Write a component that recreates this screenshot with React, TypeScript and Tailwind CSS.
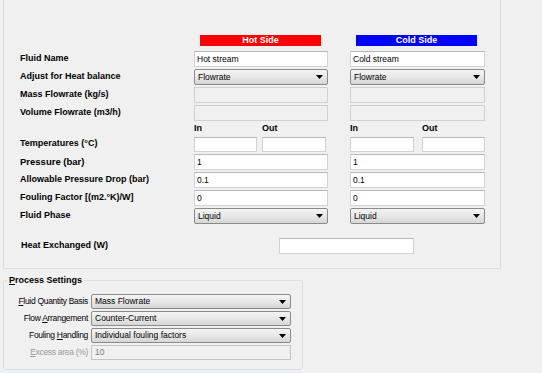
import React from "react";

const FONT = { fontFamily: '"Liberation Sans", Arial, sans-serif' };

function Arrow() {
  return (
    <svg width="7" height="4" viewBox="0 0 7 4" className="shrink-0">
      <polygon points="0,0 7,0 3.5,4" fill="#000" />
    </svg>
  );
}

function Select({ value, className = "" }: { value: string; className?: string }) {
  return (
    <div
      className={`flex items-center justify-between h-full border border-[#8a8a8a] rounded-[2px] bg-gradient-to-b from-[#f4f4f4] via-[#e8e8e8] to-[#d6d6d6] pl-[3px] pr-[4px] text-[8.5px] text-black ${className}`}
    >
      <span>{value}</span>
      <Arrow />
    </div>
  );
}

function Input({ value = "", disabled = false, className = "" }: { value?: string; disabled?: boolean; className?: string }) {
  return (
    <div
      className={`flex items-center h-full border border-[#cfd3d8] border-t-[#b5b8bd] pl-[2px] text-[8.5px] text-black ${
        disabled ? "bg-[#f0f0f0] border-t-[#cfcfcf]" : "bg-white"
      } ${className}`}
    >
      {value}
    </div>
  );
}

function Label({ children, big = false }: { children: React.ReactNode; big?: boolean }) {
  return (
    <div className={`w-[174px] shrink-0 font-bold text-black ${big ? "text-[9.5px]" : "text-[9px]"}`}>{children}</div>
  );
}

function Row({ label, hot, cold, big = false }: { label: string; hot: React.ReactNode; cold: React.ReactNode; big?: boolean }) {
  return (
    <div className="flex items-center h-[16px]">
      <Label big={big}>{label}</Label>
      <div className="w-[134px] h-full shrink-0">{hot}</div>
      <div className="w-[22px] shrink-0" />
      <div className="w-[135px] h-full shrink-0">{cold}</div>
    </div>
  );
}

function PRow({ ul, rest, pre = "", children, disabled = false }: { ul: string; rest: string; pre?: string; children: React.ReactNode; disabled?: boolean }) {
  return (
    <div className="flex items-center h-[15px]">
      <div className={`w-[84px] shrink-0 text-right text-[8.5px] tracking-[-0.3px] whitespace-nowrap ${disabled ? "text-[#9a9a9a]" : "text-black"}`}>
        {pre}
        <span className="underline">{ul}</span>
        {rest}
      </div>
      <div className="w-[3px] shrink-0" />
      <div className="w-[200px] h-full shrink-0">{children}</div>
    </div>
  );
}

export default function App() {
  return (
    <div className="w-[542px] h-[373px] bg-[#f0f0f0] overflow-hidden" style={FONT}>
      <div className="ml-[3px] w-[498px] h-[269px] border-l border-r border-b border-[#d8e0e7] pt-[35px] pl-[16px]">
        <div className="flex h-[11px] items-stretch">
          <div className="w-[174px] shrink-0" />
          <div className="w-[134px] shrink-0 pl-[6px]">
            <div className="w-[121px] h-full bg-[#ff0000] text-white font-bold text-[9px] flex items-center justify-center">Hot Side</div>
          </div>
          <div className="w-[22px] shrink-0" />
          <div className="w-[135px] shrink-0 pl-[6px]">
            <div className="w-[121px] h-full bg-[#0000ff] text-white font-bold text-[9px] flex items-center justify-center">Cold Side</div>
          </div>
        </div>
        <div className="flex flex-col gap-[2px] mt-[5px]">
          <Row label="Fluid Name" hot={<Input value="Hot stream" />} cold={<Input value="Cold stream" />} />
          <Row label="Adjust for Heat balance" hot={<Select value="Flowrate" />} cold={<Select value="Flowrate" />} />
          <Row label="Mass Flowrate (kg/s)" hot={<Input disabled />} cold={<Input disabled />} />
          <Row label="Volume Flowrate (m3/h)" hot={<Input disabled />} cold={<Input disabled />} />
        </div>
        <div className="flex h-[15px] items-center text-[9px] font-bold">
          <div className="w-[174px] shrink-0" />
          <div className="w-[68px] shrink-0">In</div>
          <div className="w-[66px] shrink-0">Out</div>
          <div className="w-[22px] shrink-0" />
          <div className="w-[72px] shrink-0">In</div>
          <div className="w-[63px] shrink-0">Out</div>
        </div>
        <div className="flex flex-col gap-[2px]">
          <div className="flex items-center h-[16px]">
            <Label>Temperatures (°C)</Label>
            <div className="w-[63px] h-[15px] shrink-0"><Input /></div>
            <div className="w-[5px] shrink-0" />
            <div className="w-[64px] h-[15px] shrink-0"><Input /></div>
            <div className="w-[24px] shrink-0" />
            <div className="w-[64px] h-[15px] shrink-0"><Input /></div>
            <div className="w-[8px] shrink-0" />
            <div className="w-[63px] h-[15px] shrink-0"><Input /></div>
          </div>
          <Row label="Pressure (bar)" big hot={<Input value="1" />} cold={<Input value="1" />} />
          <Row label="Allowable Pressure Drop (bar)" hot={<Input value="0.1" />} cold={<Input value="0.1" />} />
          <Row label="Fouling Factor [(m2.°K)/W]" hot={<Input value="0" />} cold={<Input value="0" />} />
          <Row label="Fluid Phase" hot={<Select value="Liquid" />} cold={<Select value="Liquid" />} />
        </div>
        <div className="flex items-center h-[16px] mt-[14px]">
          <div className="w-[259px] shrink-0 pl-[1px] font-bold text-[9px]">Heat Exchanged (W)</div>
          <div className="w-[135px] h-full shrink-0"><Input /></div>
        </div>
      </div>

      <div className="relative ml-[3px] mt-[11px] w-[300px] h-[90px] border border-[#d8e0e7] rounded-[3px] pt-[13px]">
        <div className="absolute left-[3px] -top-[7px] px-[2px] bg-[#f0f0f0] font-bold text-[9px] text-black">
          <span className="underline">P</span>rocess Settings
        </div>
        <div className="flex flex-col gap-[2px]">
          <PRow ul="F" rest="luid Quantity Basis"><Select value="Mass Flowrate" /></PRow>
          <PRow pre="Flow " ul="A" rest="rrangement"><Select value="Counter-Current" /></PRow>
          <PRow pre="Fouling " ul="H" rest="andling"><Select value="Individual fouling factors" /></PRow>
          <PRow ul="E" rest="xcess area (%)" disabled>
            <div className="flex items-center h-full border border-[#c2c6ca] bg-[#f0f0f0] pl-[3px] text-[8.5px] text-[#7a7a7a]">10</div>
          </PRow>
        </div>
      </div>
    </div>
  );
}
